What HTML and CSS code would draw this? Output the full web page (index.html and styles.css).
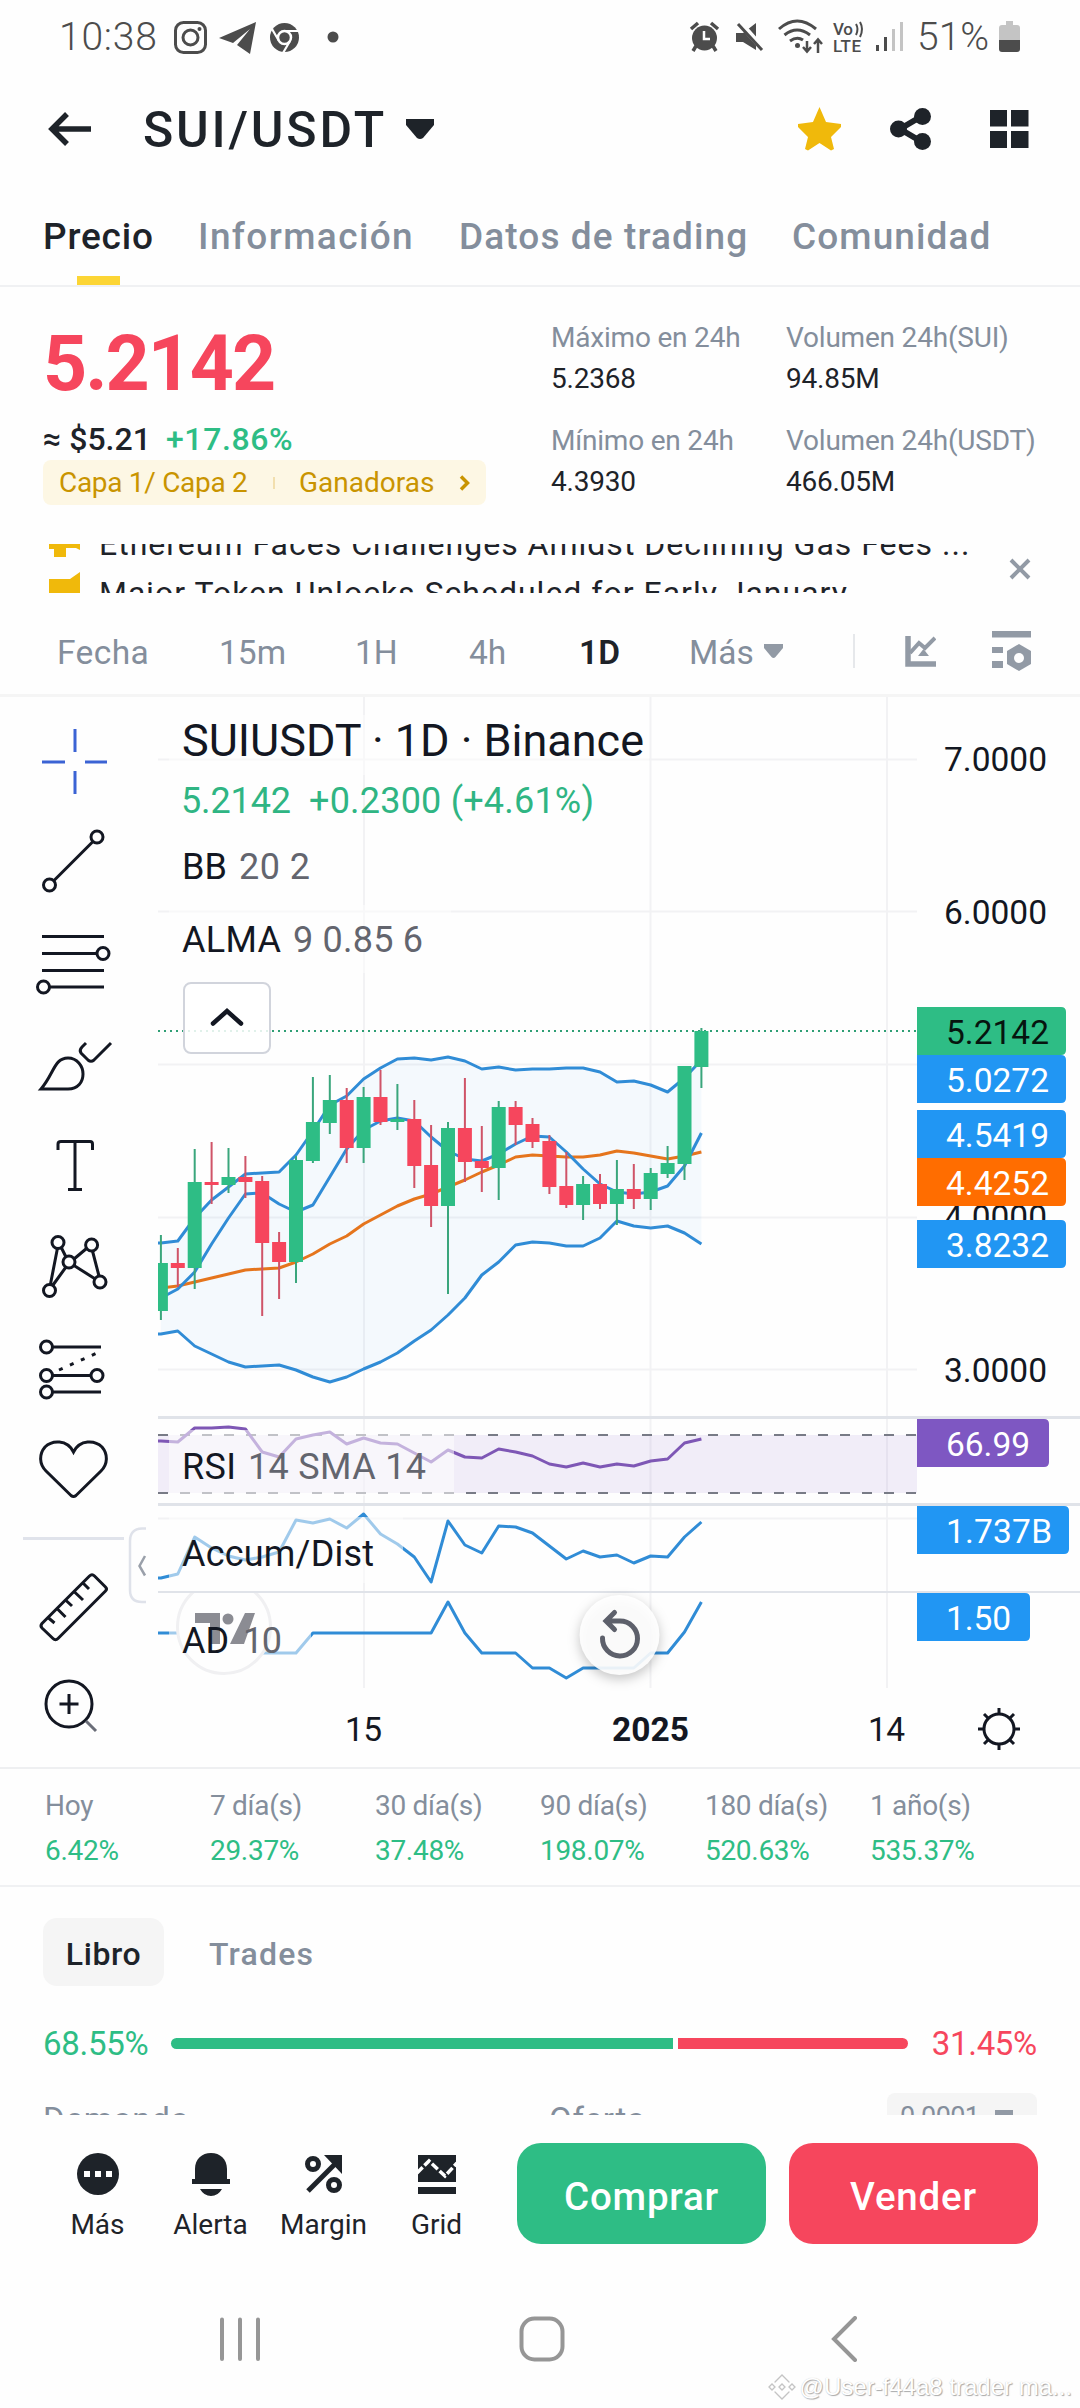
FILE: index.html
```html
<!DOCTYPE html>
<html lang="es">
<head>
  <meta charset="UTF-8" />
  <meta name="viewport" content="width=device-width, initial-scale=1.0"/>
  <title>SUI/USDT</title>
  <link rel="stylesheet" href="styles.css">
</head>
<body>

  <div class="status-bar">
    <span class="clock">10:38</span>
    <svg class="status-left" width="170" height="36" viewBox="172 19 170 36">
      <g fill="none" stroke="#4c4c4c" stroke-width="3">
        <rect x="175.500" y="22.500" width="30" height="30" rx="8"/>
        <circle cx="190.500" cy="37.500" r="7.500"/>
      </g>
      <circle cx="199.500" cy="29" r="2" fill="#4c4c4c"/>
      <path d="M219 38 256 22 250 54 237 45 250 29 233 43z" fill="#4c4c4c"/>
      <circle cx="284.500" cy="37.500" r="14.500" fill="#4c4c4c"/>
      <circle cx="284.500" cy="37.500" r="6.500" fill="#4c4c4c" stroke="#fff" stroke-width="2.500"/>
      <path d="M284.500 31H298M279 41 272 29M290 41 283 53" stroke="#fff" stroke-width="2.200"/>
      <circle cx="333" cy="37" r="5.500" fill="#4c4c4c"/>
    </svg>
    <svg class="status-right" width="220" height="40" viewBox="688 17 220 40">
      <g fill="#4c4c4c">
        <circle cx="705.500" cy="38" r="12.500"/>
        <path d="M697 46 694 51M714 46 717 51M692 29 699 23M719 29 712 23" stroke="#4c4c4c" stroke-width="3.500"/>
        <path d="M705 31V39H711" fill="none" stroke="#fff" stroke-width="2.500"/>
        <path d="M737 33H744L757 23V50L744 42H737z"/>
        <path d="M740 22 766 51" stroke="#fefefe" stroke-width="6"/>
        <path d="M739 24 763 50" stroke="#4c4c4c" stroke-width="3"/>
      </g>
      <g fill="none" stroke="#4c4c4c" stroke-width="3">
        <path d="M780 29Q798 13 817 29M785.500 35Q798 25 811 35M791 41Q798 36 804 40"/>
        <path d="M808 41V51M804 47 808 51.500 812 47M819 53V40M815 44 819 39.500 823 44" stroke-width="2.500"/>
      </g>
      <circle cx="798.500" cy="45.500" r="2.500" fill="#4c4c4c"/>
      <text class="volte" x="834" y="35" textLength="20">Vo</text>
      <path d="M857 24Q860 29 857 35M861 22Q865 29 861 37" fill="none" stroke="#4c4c4c" stroke-width="2"/>
      <text class="volte" x="834" y="52" textLength="28">LTE</text>
      <path d="M878.500 51V45M886.500 51V37" stroke="#4c4c4c" stroke-width="3"/>
      <path d="M894.500 51V29M902.500 51V22" stroke="#c4c4c4" stroke-width="3"/>
    </svg>
    <span class="battery-level">51%</span>
    <svg width="22" height="34" viewBox="1000 20 22 34">
      <path d="M1007 21H1014V25H1018Q1021 25 1021 28V40H1000V28Q1000 25 1003 25H1007z" fill="#c4c4c4"/>
      <path d="M1000 40H1021V49Q1021 52 1018 52H1003Q1000 52 1000 49z" fill="#4c4c4c"/>
    </svg>
  </div>

  <header class="top-bar">
    <svg class="back" width="48" height="40" viewBox="46 108 48 40">
      <path d="M91 128H52M67 113 52 128 67 143" fill="none" stroke="#1e2329" stroke-width="5.500"/>
    </svg>
    <h1>SUI/USDT</h1>
    <svg width="28" height="22" viewBox="0 0 28 22"><path d="M0 1H28V7L17 20Q14 22 11 20L0 7z" fill="#1e2329"/></svg>
    <div class="top-actions">
      <svg width="44" height="46" viewBox="799 105 44 46">
        <path d="M820.500 106 827 121 842 123V126L832 136 835 148 832 149.500 820.500 142 809 149.500 806 148 809 136 799 126V123L814 121z" fill="#f0b90b"/>
      </svg>
      <svg width="44" height="46" viewBox="890 105 44 46">
        <path d="M923 115 901 128 923 141" fill="none" stroke="#1e2329" stroke-width="6"/>
        <g fill="#1e2329"><circle cx="899.500" cy="128" r="8.500"/><circle cx="923.500" cy="115.500" r="8.500"/><circle cx="923.500" cy="140.500" r="8.500"/></g>
      </svg>
      <svg width="40" height="46" viewBox="991 105 40 46">
        <path d="M991 109H1008V125.500H991zM1012 109H1029.500V125.500H1012zM991 130H1008V147H991zM1012 130H1029.500V147H1012z" fill="#1e2329"/>
      </svg>
    </div>
  </header>

  <nav class="tabs">
    <a class="tab active">Precio</a>
    <a class="tab tab-info">Información</a>
    <a class="tab tab-data">Datos de trading</a>
    <a class="tab tab-community">Comunidad</a>
  </nav>

  <section class="summary">
    <div class="price-box">
      <div class="last-price">5.2142</div>
      <div class="fiat"><span class="usd">≈ $5.21</span><span class="change">+17.86%</span></div>
      <div class="tags">
        <span class="tag-layer">Capa 1/ Capa 2</span>
        <i class="tag-sep"></i>
        <span class="tag-gain">Ganadoras</span>
        <svg width="12" height="16" viewBox="0 0 12 16"><path d="M2 1.500 8.500 8 2 14.500" fill="none" stroke="#c99400" stroke-width="3.500"/></svg>
      </div>
    </div>
    <dl class="stats">
      <div><dt>Máximo en 24h</dt><dd>5.2368</dd></div>
      <div><dt>Volumen 24h(SUI)</dt><dd>94.85M</dd></div>
      <div><dt>Mínimo en 24h</dt><dd>4.3930</dd></div>
      <div><dt>Volumen 24h(USDT)</dt><dd>466.05M</dd></div>
    </dl>
  </section>

  <section class="news">
    <div class="news-window">
      <div class="news-list">
        <div class="news-item">
          <svg width="34" height="49" viewBox="48 520 34 49"><path d="M49 530H62L80 522V550L76 548H66V557H54V549H49z" fill="#f0b90b"/></svg>
          <span>Ethereum Faces Challenges Amidst Declining Gas Fees ...</span>
        </div>
        <div class="news-item">
          <svg width="34" height="49" viewBox="48 569 34 49"><path d="M49 579H70L80 572V600H66V607H54V600H49z" fill="#f0b90b"/></svg>
          <span>Major Token Unlocks Scheduled for Early January</span>
        </div>
      </div>
    </div>
    <svg class="close" width="24" height="24" viewBox="0 0 24 24"><path d="M3 3 21 21M21 3 3 21" stroke="#929aa5" stroke-width="4"/></svg>
  </section>

  <nav class="intervals">
    <span>Fecha</span>
    <span>15m</span>
    <span>1H</span>
    <span>4h</span>
    <span class="active">1D</span>
    <span>Más</span>
    <svg class="more" width="19" height="15" viewBox="0 0 19 15"><path d="M0 0H19V4L11.500 13Q9.500 15 7.500 13L0 4z" fill="#929aa5"/></svg>
    <i class="interval-sep"></i>
    <svg class="draw" width="32" height="34" viewBox="905 634 32 34">
      <path d="M909 636V664H937" fill="none" stroke="#929aa5" stroke-width="5.500"/>
      <path d="M911 653 920 643 926 648 936 638" fill="none" stroke="#929aa5" stroke-width="4"/>
      <path d="M924.500 649 930 656H919z" fill="#929aa5"/>
    </svg>
    <svg width="40" height="42" viewBox="993 631 40 42">
      <path d="M993 632H1032V638.500H993zM993 648H1004V654H993zM993 662H1004V669H993z" fill="#929aa5"/>
      <path d="M1020 645 1032 652V665L1020 672 1008 665V652z" fill="#929aa5"/>
      <circle cx="1020" cy="659" r="5" fill="#fefefe"/>
    </svg>
  </nav>

  <section class="chart">
    <div class="tools">
      <svg viewBox="24 711 100 101"><path d="M42 762H65M85 762H107M75 729V752M75 771V794" stroke="#3b63d4" /></svg>
      <svg viewBox="24 812 100 101"><path d="M54 880.500 93 841.500"/><circle cx="49.500" cy="885" r="6"/><circle cx="97" cy="837" r="6"/></svg>
      <svg viewBox="24 913 100 101"><path d="M42 936.500H104M42 953.500H97M42 970.500H104M50 987H104"/><circle cx="103" cy="953.500" r="6"/><circle cx="43.500" cy="987" r="6"/></svg>
      <svg viewBox="24 1014 100 101"><path d="M41 1089C54 1074 54 1058 68 1058C77 1058 83 1066 83 1074C83 1082 78 1089 68 1089zM86 1043 82 1047Q79 1050 81 1053L88 1060Q91 1062.500 94 1060L111 1043"/></svg>
      <svg viewBox="24 1115 100 101"><path d="M58 1150V1144Q58 1141.500 61 1141.500H90Q92.500 1141.500 92.500 1144V1150M75 1142V1189M68 1189.500H82"/></svg>
      <svg viewBox="24 1216 100 101"><path d="M57.500 1248 50.500 1284M61 1247 66 1257M53 1285 66 1267M74 1259 86.500 1248.500M74 1265.500 94.500 1278.500M92.500 1251 99 1276"/><circle cx="58" cy="1242.500" r="6"/><circle cx="91.600" cy="1245" r="6"/><circle cx="69" cy="1262" r="6"/><circle cx="49.500" cy="1290.500" r="6"/><circle cx="100" cy="1282" r="6"/></svg>
      <svg viewBox="24 1317 100 101"><path d="M53 1347H101M53 1375.500H91M53 1392H101"/><path d="M59 1370 98 1352.500" stroke-dasharray="4 8"/><circle cx="46.500" cy="1347" r="6"/><circle cx="46.500" cy="1375.500" r="6"/><circle cx="97" cy="1375.500" r="6"/><circle cx="46.500" cy="1392" r="6"/></svg>
      <svg viewBox="24 1418 100 101"><path d="M73.500 1452C67 1439 52 1440 45 1447C39 1454 39 1464 46 1471L71 1495.500Q73.500 1497.500 76 1495.500L101 1471C108 1464 108 1454 102 1447C95 1440 80 1439 73.500 1452z"/></svg>
      <hr>
      <svg viewBox="24 1557 100 101"><path d="M89.500 1576Q92 1573.500 94.500 1576L105.500 1587Q107.500 1589 105.500 1591L58 1638.500Q55.500 1641 53 1638.500L42 1628Q40 1626 42 1623.500zM48 1617.500 54.500 1623M57 1608.500 65.500 1617M65.500 1600 72 1606M74 1591.500 83 1600M83 1583 89 1589"/></svg>
      <svg viewBox="24 1658 100 101"><circle cx="69" cy="1704" r="23"/><path d="M69 1694V1714M59.500 1704H78.500"/><path d="M86 1721 96 1731" stroke="#6a6d78"/></svg>
    </div>

    <svg class="plot" id="plot" width="952" height="1070" viewBox="128 697 952 1070">
      <g class="grid">
        <path d="M158 759.500H917M158 911.500H917M158 1064.500H917M158 1217.500H917M158 1369.500H917M158 1518.500H917"/>
        <path d="M364 697V1688M650.500 697V1688M887 697V1688"/>
      </g>
      <rect x="158" y="1435" width="759" height="58" fill="#7e57c2" fill-opacity=".1"/>
      <path class="level" d="M158 1435H917M158 1493H917"/>
      <path class="last-line" d="M158 1031H917"/>
      <svg x="158" y="697" width="759" height="1000" viewBox="158 697 759 1000" id="series"></svg>

      <!-- legend -->
      <rect class="veil" x="169" y="715" width="480" height="60"/>
      <rect class="veil" x="169" y="905" width="282" height="68"/>
      <rect class="veil" x="169" y="1430" width="285" height="66"/>
      <rect class="veil" x="169" y="1517" width="234" height="66"/>
      <rect class="veil" x="169" y="1605" width="142" height="60"/>
      <g class="separators">
        <path d="M158 1417.500H1080M158 1504.500H1080"/>
        <path d="M158 1592H1080" stroke-width="2"/>
      </g>

      <clipPath id="badgeClip"><rect x="170" y="1593" width="110" height="90"/></clipPath>
      <g clip-path="url(#badgeClip)">
        <circle cx="224" cy="1627" r="46.500" fill="#fefefe" stroke="#f0f0f2" stroke-width="3"/>
        <path d="M195 1613H220V1644H210V1623H195zM245 1613H255L244 1644H230z" fill="#8b8c93"/>
        <circle cx="228" cy="1619" r="5.500" fill="#8b8c93"/>
      </g>

      <text class="title" x="182" y="756" textLength="462">SUIUSDT · 1D · Binance</text>
      <g class="up">
        <text x="181" y="813" textLength="110">5.2142</text>
        <text x="309" y="813" textLength="285">+0.2300 (+4.61%)</text>
      </g>
      <g class="ind">
        <text x="182" y="879" textLength="45">BB</text><text class="arg" x="239" y="879" textLength="71">20 2</text>
        <text x="182" y="952" textLength="99">ALMA</text><text class="arg" x="293" y="952" textLength="130">9 0.85 6</text>
        <text x="182" y="1479" textLength="54">RSI</text><text class="arg" x="248" y="1479" textLength="178">14 SMA 14</text>
        <text x="182" y="1566" textLength="192">Accum/Dist</text>
        <text x="182" y="1653" textLength="47">AD</text><text class="arg" x="243" y="1653" textLength="39">10</text>
      </g>
      <rect x="184" y="983" width="86" height="70" rx="7" fill="#fff" fill-opacity=".85" stroke="#d1d4dc" stroke-width="2"/>
      <path d="M213 1023.500 227 1011 241 1023.500" fill="none" stroke="#131722" stroke-width="4.500" stroke-linecap="round"/>

      <!-- panel handle -->
      <path d="M146 1528.500H142Q130 1529 130 1541V1590Q130 1602 142 1602H146" fill="none" stroke="#dfe2ea" stroke-width="2.500"/>
      <path d="M145 1556 139.500 1566 145 1575.500" fill="none" stroke="#9aa0aa" stroke-width="2.500"/>

      <!-- scale -->
      <g class="scale">
        <text x="944" y="771" textLength="103">7.0000</text>
        <text x="944" y="923.500" textLength="103">6.0000</text>
        <text x="944" y="1229" textLength="103">4.0000</text>
        <text x="944" y="1381.500" textLength="103">3.0000</text>
        <text x="345" y="1741" textLength="37">15</text>
        <text class="year" x="612" y="1741" textLength="77">2025</text>
        <text x="868" y="1741" textLength="37">14</text>
      </g>
      <g id="badges"></g>

      <circle class="reset" cx="619.500" cy="1635" r="40" fill="#fff" fill-opacity=".9"/>
      <path d="M602.500 1638A17.500 17.500 0 1 0 620 1621H607M614.500 1612.500 606 1621 614.500 1629.500" fill="none" stroke="#5d606b" stroke-width="5" stroke-linecap="round"/>

      <g fill="none" stroke="#131722" stroke-width="3">
        <circle cx="999" cy="1729" r="15"/>
        <path d="M999 1714V1708M999 1744V1750M984 1729H978M1014 1729H1020M988.500 1718.500 984 1714M1009.500 1718.500 1014 1714M988.500 1739.500 984 1744M1009.500 1739.500 1014 1744"/>
      </g>
    </svg>
  </section>

  <dl class="performance">
    <div><dt>Hoy</dt><dd>6.42%</dd></div>
    <div><dt>7 día(s)</dt><dd>29.37%</dd></div>
    <div><dt>30 día(s)</dt><dd>37.48%</dd></div>
    <div><dt>90 día(s)</dt><dd>198.07%</dd></div>
    <div><dt>180 día(s)</dt><dd>520.63%</dd></div>
    <div><dt>1 año(s)</dt><dd>535.37%</dd></div>
  </dl>

  <section class="book">
    <div class="book-tabs">
      <span class="pill">Libro</span>
      <span class="trades">Trades</span>
    </div>
    <div class="ratio">
      <span class="bid">68.55%</span>
      <div class="ratio-bar"><i class="ratio-bid" style="width: 68.55%"></i><i class="ratio-ask" style="width: 31.45%"></i></div>
      <span class="ask">31.45%</span>
    </div>
    <div class="depth-head">
      <span class="demand">Demanda</span>
      <span class="offer">Oferta</span>
      <span class="step">0.0001 <svg width="18" height="15" viewBox="0 0 18 15"><path d="M0 0H18V5L11 13H7L0 5z" fill="#929aa5"/></svg></span>
    </div>
  </section>

  <footer class="trade-bar">
    <a class="action">
      <svg viewBox="0 0 42 44"><circle cx="21" cy="22" r="21" fill="#1e2329"/><path d="M7 19H13V25H7zM18 19H24V25H18zM29 19H35V25H29z" fill="#fff"/></svg>
      <span>Más</span>
    </a>
    <a class="action">
      <svg viewBox="0 0 42 44"><path d="M2 32V27H5V17C5 7 12 1 21 1S37 7 37 17V27H40V32zM10 37H32Q28 44 21 44T10 37z" fill="#1e2329"/></svg>
      <span>Alerta</span>
    </a>
    <a class="action">
      <svg viewBox="0 0 42 44"><g fill="none" stroke="#1e2329" stroke-width="5"><circle cx="10" cy="12" r="5.500"/><circle cx="31" cy="33" r="5.500"/><path d="M5 39 33 11"/></g><path d="M21 3H39V22z" fill="#1e2329"/></svg>
      <span>Margin</span>
    </a>
    <a class="action">
      <svg viewBox="0 0 42 44"><path d="M2 3H40V30H2zM2 35H40V42H2z" fill="#1e2329"/><path d="M1 21 13 9 29 24 41 11" fill="none" stroke="#fff" stroke-width="3.500" stroke-dasharray="8 2.500"/></svg>
      <span>Grid</span>
    </a>
    <button class="buy">Comprar</button>
    <button class="sell">Vender</button>
  </footer>

  <div class="system-nav">
    <svg class="recents" width="40" height="46" viewBox="0 0 40 46"><path d="M2 3.500V43M20 3.500V43M38 3.500V43"/></svg>
    <svg class="home" width="46" height="46" viewBox="0 0 46 46"><rect x="2.500" y="2.500" width="41" height="41" rx="13"/></svg>
    <svg class="prev" width="28" height="46" viewBox="0 0 28 46"><path d="M25 2 4 23 25 44"/></svg>
    <div class="watermark">
      <svg width="28" height="26" viewBox="0 0 28 26"><path d="M7 8 14 1 21 8M1 13 4 10 7 13 4 16zM21 13 24 10 27 13 24 16zM11 13 14 10 17 13 14 16zM7 18 14 25 21 18" fill="none" stroke="#c4c4c4" stroke-width="1.300"/></svg>
      <span>@User-f44a8 trader ma...</span>
    </div>
  </div>

  <script src="chart.js"></script>
</body>
</html>
```
FILE: styles.css
```css
* {
  box-sizing: border-box;
}

body {
  margin: 0;
  width: 1080px;
  height: 2408px;
  overflow: hidden;
  display: flex;
  flex-direction: column;
  font-family: Roboto, "Liberation Sans", sans-serif;
  color: #1e2329;
  background: #fefefe;
}

svg {
  display: block;
  flex: none;
}

span {
  white-space: nowrap;
}

dl, dd, dt, h1 {
  margin: 0;
}

/* Status bar */
.status-bar {
  height: 74px;
  flex: none;
  display: flex;
  align-items: center;
  padding: 0 59px 0 59px;
  color: #4c4c4c;
  font-size: 39px;
  font-weight: 300;
}

.clock {
  width: 113px;
  letter-spacing: 0.8px;
}

.status-right {
  margin-left: auto;
}

.battery-level {
  width: 82px;
  padding-left: 10px;
  margin-right: 10px;
}

.volte {
  font-size: 17px;
  font-weight: 500;
  fill: #4c4c4c;
}

/* Header */
.top-bar {
  height: 110px;
  flex: none;
  display: flex;
  align-items: center;
  padding: 0 50px 0 46px;
}

.top-bar h1 {
  width: 263px;
  margin-left: 49px;
  font-size: 50px;
  font-weight: 500;
  line-height: 62px;
  padding-top: 2px;
  letter-spacing: 2.8px;
}

.top-actions {
  flex: 1;
  display: flex;
  justify-content: flex-end;
}

.top-actions svg + svg {
  margin-left: 47px;
}

.top-actions svg + svg + svg {
  margin-left: 57px;
}

/* Tabs */
.tabs {
  height: 103px;
  flex: none;
  display: flex;
  padding: 26px 0 0 43px;
  border-bottom: 2px solid #f0f1f3;
  font-size: 37px;
  font-weight: 500;
  line-height: 53px;
  letter-spacing: 1.1px;
  color: #848e9c;
}

.tab {
  position: relative;
  width: 155px;
  white-space: nowrap;
}

.tab-info {
  width: 261px;
  letter-spacing: 1.4px;
}

.tab-data {
  width: 333px;
}

.tab.active {
  color: #1e2329;
  letter-spacing: 0.8px;
}

.tab.active::after {
  content: "";
  position: absolute;
  left: 34px;
  bottom: 0;
  width: 43px;
  height: 9px;
  background: #fcd535;
}

/* Price summary */
.summary {
  height: 257px;
  flex: none;
  display: flex;
  padding: 33px 0 0 43px;
}

.price-box {
  width: 508px;
}

.last-price {
  height: 88px;
  font-size: 77px;
  font-weight: 700;
  line-height: 88px;
  letter-spacing: -2px;
  color: #f6465d;
}

.fiat {
  height: 52px;
  font-size: 32px;
  font-weight: 500;
  line-height: 62px;
}

.usd {
  display: inline-block;
  width: 123px;
}

.change {
  letter-spacing: 0.6px;
  color: #2ebd85;
}

.tags {
  width: 443px;
  height: 45px;
  display: flex;
  align-items: center;
  padding-left: 16px;
  border-radius: 8px;
  background: #fdf7e4;
  color: #c99400;
  font-size: 28px;
}

.tag-layer {
  width: 214px;
  letter-spacing: -0.3px;
}

.tag-sep {
  width: 2px;
  height: 12px;
  margin-right: 24px;
  background: #f2dfae;
}

.tag-gain {
  width: 160px;
}

.stats {
  display: grid;
  grid-template-columns: 235px 260px;
  grid-auto-rows: 103px;
  font-size: 28px;
  letter-spacing: -0.2px;
  white-space: nowrap;
}

.stats dt {
  height: 41px;
  line-height: 36px;
  color: #848e9c;
}

.stats dd {
  line-height: 36px;
}

/* News ticker */
.news {
  height: 49px;
  flex: none;
  display: flex;
  padding-left: 48px;
}

.news-window {
  width: 960px;
  height: 49px;
  overflow: hidden;
}

.news-list {
  margin-top: -24px;
}

.news-item {
  height: 49px;
  display: flex;
  align-items: center;
  font-size: 32px;
  line-height: 45px;
  letter-spacing: 1px;
}

.news-item span {
  margin-left: 17px;
}

.close {
  margin-top: 13px;
}

/* Intervals */
.intervals {
  height: 104px;
  flex: none;
  display: flex;
  align-items: center;
  padding: 15px 0 0 57px;
  border-bottom: 3px solid #f5f5f5;
  font-size: 33.5px;
  color: #848e9c;
}

.intervals span {
  padding-top: 2px;
}

.intervals span:nth-child(1) { width: 162px; letter-spacing: 0.4px; }
.intervals span:nth-child(2) { width: 136px; }
.intervals span:nth-child(3) { width: 114px; }
.intervals span:nth-child(4) { width: 110px; }
.intervals span:nth-child(5) { width: 110px; }
.intervals span:nth-child(6) { width: 75px; }

.intervals .active {
  color: #1e2329;
  font-weight: 600;
}

.interval-sep {
  width: 2px;
  height: 34px;
  margin: 0 49px 0 70px;
  background: #e6e8eb;
}

.draw {
  margin-right: 56px;
}

/* Chart */
.chart {
  height: 1072px;
  flex: none;
  display: flex;
  border-bottom: 2px solid #eeeff1;
}

.tools {
  width: 128px;
  padding-top: 14px;
}

.tools svg {
  width: 100px;
  height: 101px;
  margin-left: 24px;
  fill: none;
  stroke: #131722;
  stroke-width: 3;
}

.tools hr {
  width: 101px;
  height: 3px;
  margin: 18px 0 17px 23px;
  border: 0;
  background: #e0e3eb;
}

.grid {
  stroke: #f2f2f4;
  stroke-width: 2;
}

.level {
  stroke: #787b86;
  stroke-width: 2;
  stroke-dasharray: 10 12;
}

.last-line {
  stroke: #2e9e74;
  stroke-width: 2;
  stroke-dasharray: 2 4;
}

.line {
  fill: none;
  stroke: #308cd6;
  stroke-width: 3;
  stroke-linejoin: round;
}

.line.basis {
  stroke: #e5751d;
}

.line.rsi {
  stroke: #7e57b5;
}

.band {
  fill: #2196f3;
  fill-opacity: 0.045;
}

.veil {
  fill: #fefefe;
  fill-opacity: 0.55;
}

.separators {
  stroke: #e0e3e9;
  stroke-width: 3;
}

.plot text {
  font-size: 36px;
  fill: #131722;
}

.plot .title {
  font-size: 45px;
}

.plot .up text {
  fill: #2fb583;
}

.plot .arg {
  fill: #63656e;
}

.plot .scale text {
  font-size: 33.5px;
}

.plot .year {
  font-weight: 700;
}

.plot #badges text {
  font-size: 33.5px;
  fill: #fff;
}

.plot #badges .dark {
  fill: #06150f;
}

.reset {
  filter: drop-shadow(0 4px 6px rgba(0, 0, 0, 0.25));
}

/* Performance */
.performance {
  height: 118px;
  flex: none;
  display: grid;
  grid-template-columns: repeat(6, 165px);
  padding: 19px 0 0 45px;
  border-bottom: 2px solid #f0f1f3;
  font-size: 28px;
  line-height: 36px;
  letter-spacing: -0.3px;
}

.performance dt {
  height: 45px;
  color: #848e9c;
}

.performance dd {
  color: #2ebd85;
}

/* Order book */
.book {
  height: 228px;
  flex: none;
  overflow: hidden;
  padding: 31px 43px 0;
}

.book-tabs {
  display: flex;
  align-items: center;
  height: 68px;
  font-size: 32px;
  font-weight: 500;
  letter-spacing: 0.6px;
  color: #848e9c;
}

.pill {
  width: 121px;
  height: 68px;
  border-radius: 14px;
  background: #f5f5f5;
  color: #1e2329;
  text-align: center;
  line-height: 72px;
}

.trades {
  margin-left: 45px;
  padding-top: 3px;
  letter-spacing: 1.2px;
}

.ratio {
  display: flex;
  align-items: center;
  height: 40px;
  margin-top: 37px;
  font-size: 33px;
  letter-spacing: -0.3px;
}

.bid {
  width: 128px;
  color: #2ebd85;
}

.ask {
  width: 129px;
  text-align: right;
  color: #f6465d;
}

.ratio-bar {
  flex: 1;
  height: 11px;
  display: flex;
  gap: 5px;
}

.ratio-bid {
  border-radius: 6px 0 0 6px;
  background: #2ebd85;
}

.ratio-ask {
  border-radius: 0 6px 6px 0;
  background: #f6465d;
}

.depth-head {
  display: flex;
  margin-top: 30px;
  font-size: 33px;
  line-height: 53px;
  letter-spacing: 0.8px;
  color: #848e9c;
}

.demand {
  width: 506px;
}

.offer {
  width: 338px;
}

.step {
  width: 150px;
  height: 48px;
  display: flex;
  align-items: center;
  justify-content: space-between;
  padding: 0 24px 0 13px;
  border-radius: 8px;
  background: #f5f5f5;
  font-size: 27px;
  letter-spacing: -0.6px;
}

/* Trade bar */
.trade-bar {
  height: 175px;
  flex: none;
  display: flex;
  align-items: flex-start;
  padding: 28px 0 0 41px;
}

.action {
  width: 113px;
  padding-top: 9px;
  text-align: center;
  font-size: 28px;
  line-height: 34px;
}

.action svg {
  width: 42px;
  height: 44px;
  margin: 0 auto 12px;
}

.trade-bar button {
  width: 249px;
  height: 101px;
  margin: 0;
  padding: 5px 0 0;
  border: none;
  border-radius: 24px;
  font: 500 38.5px Roboto, sans-serif;
  letter-spacing: 0.8px;
  color: #fff;
}

.trade-bar .buy {
  margin: 0 23px 0 24px;
  background: #2ebd85;
}

.trade-bar .sell {
  background: #f6465d;
}

/* System navigation */
.system-nav {
  position: relative;
  flex: 1;
  display: flex;
  padding: 26px 0 0 220px;
  fill: none;
  stroke: #969696;
  stroke-width: 4;
  stroke-linecap: round;
}

.home {
  margin: 0 265px 0 259px;
}

.watermark {
  position: absolute;
  right: 8px;
  bottom: 7px;
  display: flex;
  align-items: center;
  gap: 4px;
  font: 24px "Liberation Sans", sans-serif;
  color: #fff;
  text-shadow: 1px 1px 1px #a8a8a8, 0 0 1px #c8c8c8;
}
```
FILE: chart.js
```js
var NS = "http://www.w3.org/2000/svg";
var series = document.getElementById("series");
var badges = document.getElementById("badges");
var firstX = 160.9;
var stepX = 16.89;

function add(parent, tag, attrs) {
  var el = document.createElementNS(NS, tag);
  for (var key in attrs) el.setAttribute(key, attrs[key]);
  parent.appendChild(el);
  return el;
}

function x(i) {
  return (firstX + i * stepX).toFixed(1);
}

function points(values) {
  return values.map(function (v, i) { return x(i) + "," + v; });
}

function line(values, name) {
  add(series, "polyline", { "class": "line " + name, points: "150," + values[0] + " " + points(values).join(" ") });
}

// high, body top, body bottom, low, 1 = up
var candles = [
  [1235, 1263, 1311, 1320, 1], [1248, 1263, 1268, 1287, 0], [1149, 1182, 1268, 1289, 1],
  [1142, 1182, 1185, 1204, 0], [1148, 1177, 1185, 1193, 1], [1156, 1177, 1182, 1198, 0],
  [1176, 1181, 1243, 1316, 0], [1232, 1242, 1262, 1299, 0], [1156, 1160, 1262, 1283, 1],
  [1077, 1122, 1161, 1163, 1], [1075, 1100, 1123, 1134, 1], [1088, 1100, 1148, 1163, 0],
  [1087, 1097, 1148, 1163, 1], [1070, 1097, 1122, 1125, 0], [1084, 1119, 1122, 1130, 1],
  [1100, 1119, 1166, 1188, 0], [1125, 1165, 1206, 1227, 0], [1122, 1128, 1206, 1294, 1],
  [1078, 1128, 1162, 1182, 0], [1126, 1161, 1168, 1192, 0], [1101, 1107, 1168, 1200, 1],
  [1101, 1107, 1125, 1145, 0], [1118, 1124, 1142, 1148, 0], [1135, 1141, 1187, 1194, 0],
  [1152, 1186, 1205, 1208, 0], [1176, 1184, 1205, 1220, 1], [1174, 1184, 1204, 1209, 0],
  [1160, 1189, 1204, 1225, 1], [1164, 1189, 1199, 1209, 0], [1168, 1173, 1199, 1210, 1],
  [1146, 1163, 1174, 1178, 1], [1066, 1066, 1164, 1180, 1], [1028, 1031, 1067, 1088, 1]
];

var upper = [1243, 1241, 1218, 1200, 1187, 1174, 1173, 1172, 1155, 1131, 1105, 1096, 1079, 1068, 1059, 1058, 1060, 1057, 1061, 1069, 1067, 1070, 1069, 1069, 1068, 1068, 1072, 1082, 1081, 1085, 1092, 1078, 1060];
var lower = [1334, 1331, 1346, 1354, 1362, 1367, 1366, 1365, 1370, 1377, 1382, 1377, 1369, 1362, 1353, 1341, 1330, 1315, 1298, 1275, 1262, 1245, 1242, 1243, 1246, 1246, 1238, 1221, 1226, 1228, 1226, 1233, 1244];
var basis = [1288, 1286, 1282, 1278, 1274, 1270, 1269, 1268, 1262, 1254, 1244, 1236, 1224, 1215, 1206, 1199, 1194, 1187, 1180, 1172, 1165, 1157, 1155, 1156, 1157, 1157, 1155, 1151, 1153, 1156, 1159, 1156, 1152];
var alma = [1298, 1289, 1272, 1244, 1218, 1194, 1193, 1204, 1212, 1205, 1177, 1149, 1130, 1121, 1118, 1121, 1137, 1151, 1159, 1161, 1154, 1144, 1136, 1137, 1152, 1169, 1184, 1192, 1194, 1192, 1186, 1166, 1133];
var rsi = [1441, 1442, 1428, 1428, 1427, 1429, 1452, 1457, 1439, 1435, 1432, 1444, 1438, 1443, 1444, 1453, 1462, 1450, 1457, 1458, 1449, 1452, 1456, 1464, 1467, 1463, 1467, 1464, 1466, 1461, 1459, 1443, 1439];
var accum = [1578, 1574, 1537, 1548, 1556, 1560, 1557, 1552, 1520, 1523, 1519, 1528, 1514, 1534, 1544, 1557, 1582, 1521, 1545, 1553, 1526, 1527, 1533, 1546, 1559, 1551, 1557, 1555, 1563, 1556, 1557, 1537, 1522];
var ad = [1633, 1633, 1620, 1620, 1620, 1633, 1653, 1653, 1653, 1633, 1633, 1633, 1633, 1633, 1633, 1633, 1633, 1602, 1633, 1653, 1653, 1653, 1668, 1668, 1678, 1668, 1668, 1668, 1668, 1653, 1653, 1632, 1602];

add(series, "polygon", { "class": "band", points: points(upper).concat(points(lower).reverse()).join(" ") });
line(upper, "");
line(lower, "");
line(basis, "basis");
line(alma, "");

candles.forEach(function (c, i) {
  var cx = Number(x(i));
  add(series, "rect", { x: cx - 1, y: c[0], width: 2, height: c[3] - c[0], fill: c[4] ? "#3aa67c" : "#cf5468" });
  add(series, "rect", { x: cx - 7, y: c[1], width: 14, height: c[2] - c[1], fill: c[4] ? "#2ebd85" : "#f6465d" });
});

line(rsi, "rsi");
line(accum, "");
line(ad, "");

// text, top, width, color, text width
[
  ["5.2142", 1007, 149, "#2ebd85", 103],
  ["5.0272", 1055, 149, "#2196f3", 103],
  ["4.5419", 1110, 149, "#2196f3", 103],
  ["4.4252", 1158, 149, "#ff6d00", 103],
  ["3.8232", 1220, 149, "#2196f3", 103],
  ["66.99", 1419, 132, "#7e57c2", 84],
  ["1.737B", 1506, 152, "#2196f3", 106],
  ["1.50", 1593, 113, "#2196f3", 65]
].forEach(function (b) {
  var r = 917 + b[2], y = b[1];
  add(badges, "path", {
    d: "M917 " + y + "H" + (r - 5) + "Q" + r + " " + y + " " + r + " " + (y + 5) + "V" + (y + 43) + "Q" + r + " " + (y + 48) + " " + (r - 5) + " " + (y + 48) + "H917z",
    fill: b[3]
  });
  var t = add(badges, "text", { x: 946, y: y + 37, textLength: b[4] });
  if (b[0] === "5.2142") t.setAttribute("class", "dark");
  t.textContent = b[0];
});
```
